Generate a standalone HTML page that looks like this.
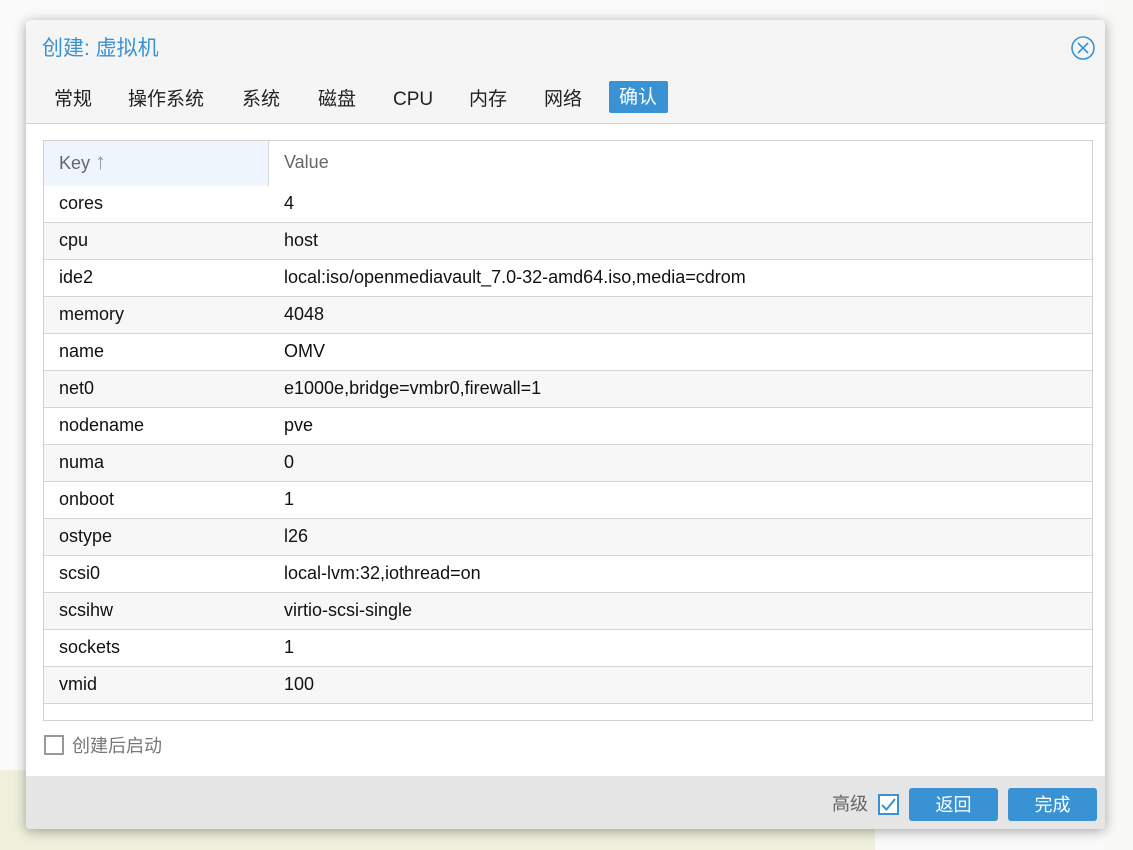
<!DOCTYPE html>
<html><head><meta charset="utf-8"><style>
*{box-sizing:border-box;margin:0;padding:0}
body{width:1133px;height:850px;overflow:hidden;position:relative;background:#fafafa;font-family:"Liberation Sans","Noto Sans CJK SC",sans-serif;}
.bgg{position:absolute;left:0;top:770px;width:875px;height:80px;background:#eef0dc}
.bgr{position:absolute;left:1105px;top:0;width:28px;height:850px;background:#f8f8f6}
.dlg{position:absolute;left:26px;top:20px;width:1079px;height:809px;background:#f5f5f5;border-radius:4px;box-shadow:0 2px 12px rgba(0,0,0,.35);overflow:hidden}
.title{position:absolute;left:16px;top:12px;font-size:21px;color:#3892d4}
.close{position:absolute;left:1044px;top:15px}
.tab{position:absolute;top:64px;height:32px;line-height:32px;font-size:19px;color:#222;padding:0 10px}
.tab.act{top:61px;background:#3892d4;color:#fff;border-radius:2px;line-height:34px}
.body{position:absolute;left:0;top:103px;width:1079px;height:653px;background:#fff;border-top:1px solid #d0d0d0}
.grid{position:absolute;left:17px;top:16px;width:1050px;height:581px;border:1px solid #d0d0d0}
.hdr{height:45px;display:flex;font-size:18px;color:#666}
.hdr div{line-height:42px;padding-left:15px}
.row{height:37px;display:flex;border-bottom:1px solid #d4d4d4;font-size:18px;color:#111}
.row div{line-height:35px;padding-left:15px}
.k{width:225px}
.row:nth-child(even){background:#f7f7f7}
.chk{position:absolute;left:18px;top:608px;font-size:18px;color:#777;display:flex;align-items:center}
.box{width:20px;height:20px;border:2px solid #999;margin-right:8px}
.foot{position:absolute;left:0;top:756px;width:1079px;height:53px;background:#e5e5e5}
.btn{position:absolute;top:12px;width:89px;height:33px;background:#3892d4;color:#fff;border-radius:3px;text-align:center;line-height:33px;font-size:18px}
.arr{color:#999;font-size:22px}
</style></head><body>
<div class="bgg"></div><div class="bgr"></div>
<div class="dlg">
<div class="title">创建: 虚拟机</div>
<svg class="close" width="26" height="26" viewBox="0 0 26 26"><circle cx="13" cy="13" r="11" fill="none" stroke="#3892d4" stroke-width="1.6"/><path d="M8 8L18 18M18 8L8 18" stroke="#3892d4" stroke-width="1.6"/></svg>
<div class="tab" style="left:18px">常规</div>
<div class="tab" style="left:92px">操作系统</div>
<div class="tab" style="left:206px">系统</div>
<div class="tab" style="left:282px">磁盘</div>
<div class="tab" style="left:357px">CPU</div>
<div class="tab" style="left:433px">内存</div>
<div class="tab" style="left:508px">网络</div>
<div class="tab act" style="left:583px;width:59px">确认</div>
<div class="body">
<div class="grid">
<div class="hdr"><div class="k" style="background:#eef5fc;border-right:1px solid #d8d8d8">Key <span class="arr">↑</span></div><div>Value</div></div>
<div>
<div class="row"><div class="k">cores</div><div>4</div></div>
<div class="row"><div class="k">cpu</div><div>host</div></div>
<div class="row"><div class="k">ide2</div><div>local:iso/openmediavault_7.0-32-amd64.iso,media=cdrom</div></div>
<div class="row"><div class="k">memory</div><div>4048</div></div>
<div class="row"><div class="k">name</div><div>OMV</div></div>
<div class="row"><div class="k">net0</div><div>e1000e,bridge=vmbr0,firewall=1</div></div>
<div class="row"><div class="k">nodename</div><div>pve</div></div>
<div class="row"><div class="k">numa</div><div>0</div></div>
<div class="row"><div class="k">onboot</div><div>1</div></div>
<div class="row"><div class="k">ostype</div><div>l26</div></div>
<div class="row"><div class="k">scsi0</div><div>local-lvm:32,iothread=on</div></div>
<div class="row"><div class="k">scsihw</div><div>virtio-scsi-single</div></div>
<div class="row"><div class="k">sockets</div><div>1</div></div>
<div class="row"><div class="k">vmid</div><div>100</div></div>
</div></div>
<div class="chk"><span class="box"></span>创建后启动</div>
</div>
<div class="foot">
<div style="position:absolute;left:806px;top:14px;font-size:18px;color:#666">高级</div>
<svg style="position:absolute;left:852px;top:18px" width="21" height="21" viewBox="0 0 21 21"><rect x="1" y="1" width="19" height="19" fill="#fff" stroke="#3892d4" stroke-width="2"/><path d="M4 11L8.5 15.5L17 5" fill="none" stroke="#3892d4" stroke-width="2"/></svg>
<div class="btn" style="left:883px;line-height:35px">返回</div>
<div class="btn" style="left:982px;line-height:35px">完成</div>
</div>
</div>
</body></html>
